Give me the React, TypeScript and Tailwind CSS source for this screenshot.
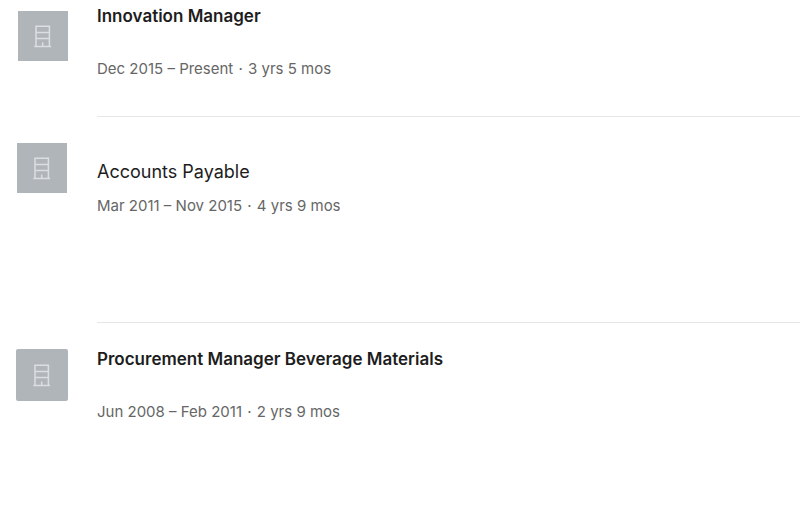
import clsx from "clsx";

interface Experience {
  title: string;
  dates: string;
  duration: string;
  rowClass: string;
  logoClass: string;
  titleClass: string;
  datesClass: string;
}

const experiences: Experience[] = [
  {
    title: "Innovation Manager",
    dates: "Dec 2015 – Present",
    duration: "3 yrs 5 mos",
    rowClass: "pb-[35px]",
    logoClass: "mt-[11px] ml-[18px] mr-[29px] size-[50px]",
    titleClass: "pt-1 text-[17px] font-semibold",
    datesClass: "mt-[29px]",
  },
  {
    title: "Accounts Payable",
    dates: "Mar 2011 – Nov 2015",
    duration: "4 yrs 9 mos",
    rowClass: "pb-[104px]",
    logoClass: "mt-[26px] ml-[17px] mr-[30px] size-[50px]",
    titleClass: "pt-[43px] text-[18px]",
    datesClass: "mt-[10px]",
  },
  {
    title: "Procurement Manager Beverage Materials",
    dates: "Jun 2008 – Feb 2011",
    duration: "2 yrs 9 mos",
    rowClass: "pb-9",
    logoClass: "mt-[26px] ml-4 mr-[29px] size-[52px] rounded-xs",
    titleClass: "pt-[24px] text-[17px] font-semibold",
    datesClass: "mt-[29px]",
  },
];

function CompanyLogo({ className }: { className: string }) {
  return (
    <div className={clsx("flex shrink-0 items-center justify-center bg-[#b0b5b9]", className)}>
      <svg viewBox="0 0 18 24" className="h-6 w-[18px]" fill="none" stroke="#dcdfe1" strokeWidth="1.5" aria-hidden="true">
        <path d="M2 22V2.2h13.4V22M.3 22.4h16.8M2 8.6h13.4M2 14.6h13.4M8.7 22v-3.4" />
      </svg>
    </div>
  );
}

function ExperienceItem({ item, last }: { item: Experience; last: boolean }) {
  return (
    <li className="flex items-start">
      <CompanyLogo className={item.logoClass} />
      <div className={clsx("min-w-0 flex-1", item.rowClass, !last && "border-b border-[#e6e6e6]")}>
        <h3 className={clsx("leading-6 text-[#1d1d1d]", item.titleClass)}>{item.title}</h3>
        <p className={clsx("text-[15px] leading-6 text-[#666666]", item.datesClass)}>
          {item.dates} <span className="mx-px">·</span> {item.duration}
        </p>
      </div>
    </li>
  );
}

export default function App() {
  return (
    <main className="min-h-screen bg-white font-['Inter',sans-serif]">
      <ul>
        {experiences.map((item, index) => (
          <ExperienceItem key={item.title} item={item} last={index === experiences.length - 1} />
        ))}
      </ul>
    </main>
  );
}
